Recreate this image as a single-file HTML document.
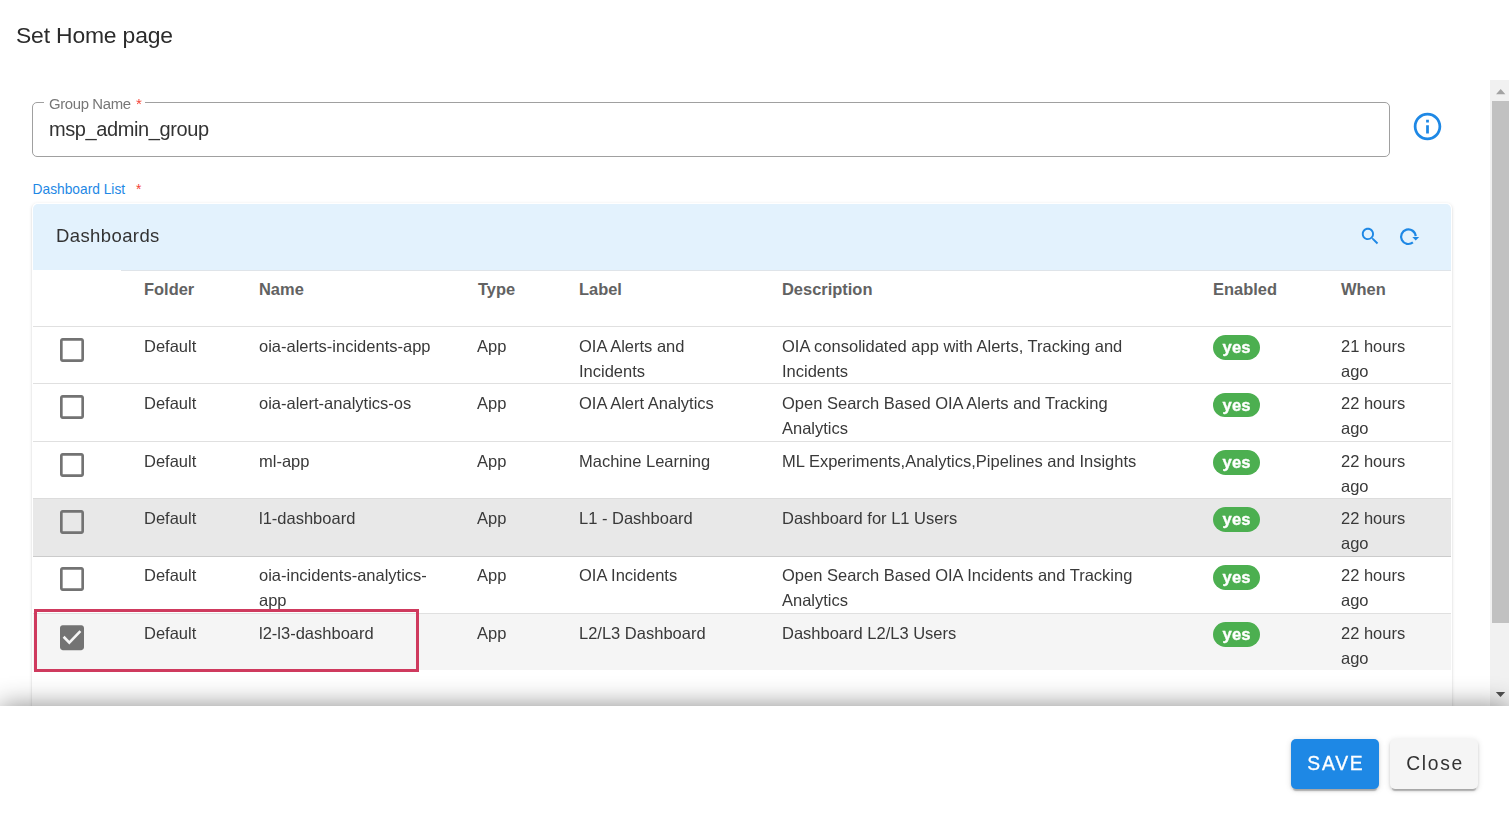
<!DOCTYPE html>
<html lang="en">
<head>
<meta charset="utf-8">
<title>Set Home page</title>
<style>
html,body{margin:0;padding:0;}
body{width:1509px;height:818px;overflow:hidden;background:#fff;position:relative;
  font-family:"Liberation Sans",Arial,sans-serif;color:#333;}
.abs{position:absolute;white-space:nowrap;}
.gs{will-change:transform;}
#title{left:16.1px;top:21.1px;font-size:22.9px;line-height:28px;letter-spacing:-0.17px;color:#2b2b2b;}
#fs{left:32px;top:102px;width:1356px;height:53px;border:1px solid #a0a0a0;border-radius:5px;box-sizing:content-box;}
#fsnotch{left:44px;top:100px;width:101px;height:5px;background:#fff;}
#fslabel{left:48.7px;top:96.3px;font-size:14.9px;line-height:16px;color:#777;letter-spacing:-0.36px;}
#fsstar{left:136px;top:96.3px;font-size:14.9px;line-height:16px;color:#f44336;}
#fsval{left:48.5px;top:117px;font-size:20px;line-height:24px;color:#333;letter-spacing:-0.4px;}
#dl{left:32.6px;top:182px;font-size:13.75px;line-height:16px;color:#1e88e5;}
#dlstar{left:136px;top:182px;font-size:13.75px;line-height:16px;color:#f44336;}
#card{left:32px;top:203px;width:1420px;height:520px;background:#fff;border-radius:5px 5px 0 0;
  box-shadow:0 2.5px 1.25px -1.25px rgba(0,0,0,.2),0 1.25px 1.25px 0 rgba(0,0,0,.14),0 1.25px 3.75px 0 rgba(0,0,0,.12);}
#chead{left:1px;top:1px;width:1418px;height:66px;background:#e3f2fd;border-radius:5px 5px 0 0;}
#ctitle{left:24px;top:20.6px;font-size:18.5px;line-height:24px;color:#333;letter-spacing:.4px;}
.th{font-weight:bold;font-size:16.45px;line-height:24px;color:#626262;top:277px;}
.row{left:33px;width:1418px;border-top:1px solid #e0e0e0;box-sizing:border-box;}
.td{font-size:16.5px;line-height:25px;color:#393939;white-space:nowrap;will-change:transform;}
.badge{left:1213px;width:47px;height:25px;border-radius:13px;background:#4caf50;color:#fff;font-weight:bold;
  font-size:16.6px;line-height:26px;text-align:center;letter-spacing:.25px;text-indent:.25px;-webkit-text-stroke:.35px #fff;}
#footer{left:0;top:706px;width:1509px;height:130px;background:#fff;box-shadow:0 0 25px rgba(0,0,0,.46);}
.btn{top:739px;height:50px;border-radius:5px;font-size:19.3px;line-height:50px;text-align:center;
  box-shadow:0 4px 1px -2px rgba(0,0,0,.2),0 2px 3px 0 rgba(0,0,0,.14),0 1px 6px 0 rgba(0,0,0,.12);}
#save{left:1291px;width:88px;background:#1e88e5;color:#fff;letter-spacing:1.75px;text-indent:1.75px;-webkit-text-stroke:0.3px #fff;}
#close{left:1390px;width:88px;background:#f5f5f5;color:#333;letter-spacing:1.7px;text-indent:2.2px;}
#sb{left:1490px;top:80px;width:19px;height:626px;background:#f1f1f1;}
#sbthumb{left:1492px;top:101px;width:17px;height:522px;background:#c1c1c1;}
</style>
</head>
<body>
<div id="title" class="abs gs">Set Home page</div>

<div id="fs" class="abs"></div>
<div id="fsnotch" class="abs"></div>
<div id="fslabel" class="abs gs">Group Name</div>
<div id="fsstar" class="abs gs">*</div>
<div id="fsval" class="abs gs">msp_admin_group</div>

<svg class="abs" style="left:1410.7px;top:110.1px" width="33" height="33" viewBox="0 0 24 24"><path fill="#1e88e5" d="M11 7h2v2h-2zm0 4h2v6h-2zm1-9C6.48 2 2 6.48 2 12s4.48 10 10 10 10-4.48 10-10S17.52 2 12 2zm0 18c-4.41 0-8-3.59-8-8s3.590-8 8-8 8 3.590 8 8-3.590 8-8 8z"/></svg>

<div id="dl" class="abs">Dashboard List</div>
<div id="dlstar" class="abs">*</div>

<div id="card" class="abs">
  <div id="chead" class="abs"></div>
  <div id="ctitle" class="abs gs">Dashboards</div>
  <div class="abs" style="left:89px;top:67px;width:1330px;height:1px;background:#dfe4e9"></div>
</div>

<!--TABLE-->
<div id="thead">
<div class="abs th" style="left:144px">Folder</div>
<div class="abs th" style="left:259px">Name</div>
<div class="abs th" style="left:478px">Type</div>
<div class="abs th" style="left:579px">Label</div>
<div class="abs th" style="left:782px">Description</div>
<div class="abs th" style="left:1213px">Enabled</div>
<div class="abs th" style="left:1341px">When</div>
</div>
<div class="abs row" style="top:326px;height:57px;background:#fff;border-top-color:#e0e0e0">
<svg class="abs" style="left:23px;top:7.3px" width="32" height="32" viewBox="0 0 24 24"><path fill="#737373" d="M19 5v14H5V5h14m0-2H5c-1.1 0-2 .9-2 2v14c0 1.1.9 2 2 2h14c1.1 0 2-.9 2-2V5c0-1.1-.9-2-2-2z"/></svg>
<div class="abs td" style="left:111.0px;top:6.6px">Default</div>
<div class="abs td" style="left:225.5px;top:6.6px">oia-alerts-incidents-app</div>
<div class="abs td" style="left:444.2px;top:6.6px">App</div>
<div class="abs td" style="left:546.0px;top:6.6px">OIA Alerts and<br>Incidents</div>
<div class="abs td" style="left:749.0px;top:6.6px">OIA consolidated app with Alerts, Tracking and<br>Incidents</div>
<div class="abs badge gs" style="left:1180px;top:8px;height:25px;line-height:26px">yes</div>
<div class="abs td" style="left:1308.0px;top:6.6px">21 hours<br>ago</div>
</div>
<div class="abs row" style="top:383px;height:58px;background:#fff;border-top-color:#e0e0e0">
<svg class="abs" style="left:23px;top:7.3px" width="32" height="32" viewBox="0 0 24 24"><path fill="#737373" d="M19 5v14H5V5h14m0-2H5c-1.1 0-2 .9-2 2v14c0 1.1.9 2 2 2h14c1.1 0 2-.9 2-2V5c0-1.1-.9-2-2-2z"/></svg>
<div class="abs td" style="left:111.0px;top:6.6px">Default</div>
<div class="abs td" style="left:225.5px;top:6.6px">oia-alert-analytics-os</div>
<div class="abs td" style="left:444.2px;top:6.6px">App</div>
<div class="abs td" style="left:546.0px;top:6.6px">OIA Alert Analytics</div>
<div class="abs td" style="left:749.0px;top:6.6px">Open Search Based OIA Alerts and Tracking<br>Analytics</div>
<div class="abs badge gs" style="left:1180px;top:9px;height:24px;line-height:25px">yes</div>
<div class="abs td" style="left:1308.0px;top:6.6px">22 hours<br>ago</div>
</div>
<div class="abs row" style="top:441px;height:57px;background:#fff;border-top-color:#e0e0e0">
<svg class="abs" style="left:23px;top:7.3px" width="32" height="32" viewBox="0 0 24 24"><path fill="#737373" d="M19 5v14H5V5h14m0-2H5c-1.1 0-2 .9-2 2v14c0 1.1.9 2 2 2h14c1.1 0 2-.9 2-2V5c0-1.1-.9-2-2-2z"/></svg>
<div class="abs td" style="left:111.0px;top:6.6px">Default</div>
<div class="abs td" style="left:225.5px;top:6.6px">ml-app</div>
<div class="abs td" style="left:444.2px;top:6.6px">App</div>
<div class="abs td" style="left:546.0px;top:6.6px">Machine Learning</div>
<div class="abs td" style="left:749.0px;top:6.6px">ML Experiments,Analytics,Pipelines and Insights</div>
<div class="abs badge gs" style="left:1180px;top:8px;height:25px;line-height:26px">yes</div>
<div class="abs td" style="left:1308.0px;top:6.6px">22 hours<br>ago</div>
</div>
<div class="abs row" style="top:498px;height:58px;background:#e8e8e8;border-top-color:#dcdcdc">
<svg class="abs" style="left:23px;top:7.3px" width="32" height="32" viewBox="0 0 24 24"><path fill="#737373" d="M19 5v14H5V5h14m0-2H5c-1.1 0-2 .9-2 2v14c0 1.1.9 2 2 2h14c1.1 0 2-.9 2-2V5c0-1.1-.9-2-2-2z"/></svg>
<div class="abs td" style="left:111.0px;top:6.6px">Default</div>
<div class="abs td" style="left:225.5px;top:6.6px">l1-dashboard</div>
<div class="abs td" style="left:444.2px;top:6.6px">App</div>
<div class="abs td" style="left:546.0px;top:6.6px">L1 - Dashboard</div>
<div class="abs td" style="left:749.0px;top:6.6px">Dashboard for L1 Users</div>
<div class="abs badge gs" style="left:1180px;top:8px;height:25px;line-height:26px">yes</div>
<div class="abs td" style="left:1308.0px;top:6.6px">22 hours<br>ago</div>
</div>
<div class="abs row" style="top:556px;height:57px;background:#fff;border-top-color:#cbcbcb">
<svg class="abs" style="left:23px;top:6.3px" width="32" height="32" viewBox="0 0 24 24"><path fill="#737373" d="M19 5v14H5V5h14m0-2H5c-1.1 0-2 .9-2 2v14c0 1.1.9 2 2 2h14c1.1 0 2-.9 2-2V5c0-1.1-.9-2-2-2z"/></svg>
<div class="abs td" style="left:111.0px;top:5.6px">Default</div>
<div class="abs td" style="left:225.5px;top:5.6px">oia-incidents-analytics-<br>app</div>
<div class="abs td" style="left:444.2px;top:5.6px">App</div>
<div class="abs td" style="left:546.0px;top:5.6px">OIA Incidents</div>
<div class="abs td" style="left:749.0px;top:5.6px">Open Search Based OIA Incidents and Tracking<br>Analytics</div>
<div class="abs badge gs" style="left:1180px;top:8px;height:25px;line-height:26px">yes</div>
<div class="abs td" style="left:1308.0px;top:5.6px">22 hours<br>ago</div>
</div>
<div class="abs row" style="top:613px;height:57px;background:#f5f5f5;border-top-color:#e0e0e0">
<svg class="abs" style="left:23px;top:6.85px" width="32" height="33.3" viewBox="0 0 24 24" preserveAspectRatio="none"><path fill="#737373" d="M19 3H5c-1.11 0-2 .9-2 2v14c0 1.1.89 2 2 2h14c1.11 0 2-.9 2-2V5c0-1.1-.89-2-2-2zm-9 14l-5-5 1.41-1.41L10 14.17l7.59-7.59L19 8l-9 9z"/></svg>
<div class="abs td" style="left:111.0px;top:6.6px">Default</div>
<div class="abs td" style="left:225.5px;top:6.6px">l2-l3-dashboard</div>
<div class="abs td" style="left:444.2px;top:6.6px">App</div>
<div class="abs td" style="left:546.0px;top:6.6px">L2/L3 Dashboard</div>
<div class="abs td" style="left:749.0px;top:6.6px">Dashboard L2/L3 Users</div>
<div class="abs badge gs" style="left:1180px;top:8px;height:25px;line-height:26px">yes</div>
<div class="abs td" style="left:1308.0px;top:6.6px">22 hours<br>ago</div>
</div>
<div id="redbox" class="abs" style="left:34px;top:609px;width:379px;height:57px;border:3px solid #cf3a5e"></div>
<!--/TABLE-->
<svg class="abs" style="left:1359.1px;top:225.3px" width="22.5" height="22.5" viewBox="0 0 24 24"><path fill="#1e88e5" d="M15.5 14h-.79l-.28-.27C15.41 12.590 16 11.110 16 9.500 16 5.910 13.090 3 9.500 3S3 5.910 3 9.500 5.910 16 9.500 16c1.610 0 3.090-.59 4.230-1.570l.27.28v.79l5 4.990L20.490 19l-4.990-5zm-6 0C7.010 14 5 11.990 5 9.500S7.010 5 9.500 5 14 7.010 14 9.500 11.990 14 9.500 14z"/></svg>
<svg class="abs" style="left:0;top:0" width="1509" height="300" viewBox="0 0 1509 300"><path fill="none" stroke="#1e88e5" stroke-width="2.2" d="M1412.89 242.45A7.3 7.3 0 1 1 1415.68 236.19"/><path fill="#1e88e5" d="M1412.3 236.9h6.9l-3.5 3.6z"/></svg>
<div id="sb" class="abs"></div>
<div id="sbthumb" class="abs"></div>
<svg class="abs" style="left:1490px;top:80px" width="19" height="626" viewBox="0 0 19 626"><path fill="#a3a3a3" d="M6 14.200h9.400l-4.700-5.200z"/><path fill="#505050" d="M5.800 611.900h9.400l-4.700 5.200z"/></svg>
<div id="footer" class="abs"></div>
<div id="save" class="abs btn gs">SAVE</div>
<div id="close" class="abs btn gs">Close</div>

</body>
</html>
